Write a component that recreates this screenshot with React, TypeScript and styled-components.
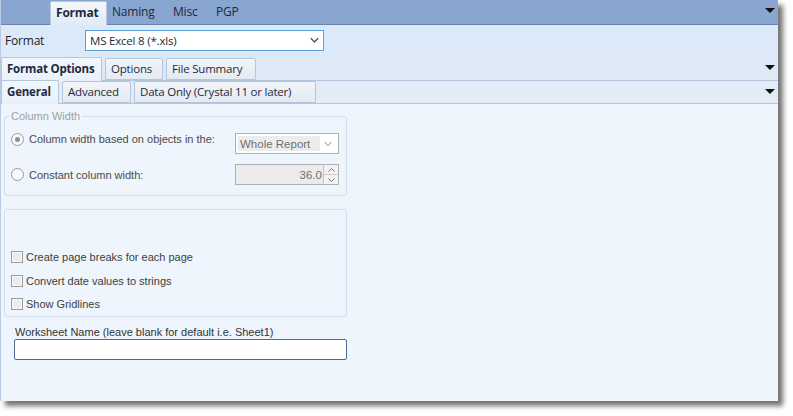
import React from "react";
import styled, {createGlobalStyle} from "styled-components";

const GlobalStyle = createGlobalStyle`
    html, body {
        margin: 0;
        padding: 0;
        background: #ffffff;
    }
    body {
        font-family: "Liberation Sans", Arial, sans-serif;
        font-size: 12px;
        color: #333;
    }
`;

const Page = styled.div`
    width: 793px;
    height: 416px;
`;

const Panel = styled.div`
    width: 778px;
    height: 401px;
    background: #eef5fd;
    border-left: 1px solid #b9cbe2;
    box-sizing: border-box;
    box-shadow: 5px 5px 5px rgba(0, 0, 0, 0.55);
    display: flex;
    flex-direction: column;
`;

const Strip = styled.div<{ $bg: string; $h: number; $pad: number; $line: string }>`
    height: ${(p) => p.$h}px;
    background: ${(p) => p.$bg};
    border-bottom: 1px solid ${(p) => p.$line};
    box-sizing: border-box;
    display: flex;
    align-items: flex-end;
    padding-left: ${(p) => p.$pad}px;
    padding-right: 3px;
    flex-shrink: 0;
`;

const Tab = styled.div<{ $active?: boolean; $w: number }>`
    width: ${(p) => p.$w}px;
    height: ${(p) => (p.$active ? 24 : 22)}px;
    margin-right: 3px;
    margin-bottom: ${(p) => (p.$active ? -1 : 0)}px;
    box-sizing: border-box;
    display: flex;
    align-items: center;
    padding: 0 0 2px 5px;
    font-family: "Open Sans", "Noto Sans", sans-serif;
    font-size: 11.5px;
    letter-spacing: -0.2px;
    font-weight: ${(p) => (p.$active ? 700 : 400)};
    color: #1e2a3c;
    border: 1px solid #b4c6dc;
    border-bottom: ${(p) => (p.$active ? "none" : undefined)};
    border-radius: 2px 2px 0 0;
    background: ${(p) =>
        p.$active
            ? "linear-gradient(#f2f7fd, #e8f1fb)"
            : "linear-gradient(#f2f5f9, #e3eaf3)"};
`;

const TopTab = styled(Tab)`
    font-size: 12px;
    margin-right: 0;
    padding: 0 0 3px ${(p) => (p.$active ? 5 : 4)}px;
    border-color: ${(p) => (p.$active ? "#b7c8de" : "transparent")};
    background: ${(p) => (p.$active ? "linear-gradient(#f4f8fd, #e0ebf8)" : "transparent")};
`;

const Spacer = styled.div`
    flex: 1;
`;

const Arrow = styled.div<{ $lift: number }>`
    width: 0;
    height: 0;
    border-left: 5px solid transparent;
    border-right: 5px solid transparent;
    border-top: 5px solid #111;
    align-self: center;
    margin: 0 0 ${(p) => p.$lift}px 0;
`;

const FormatRow = styled.div`
    height: 31px;
    background: #dce9f9;
    display: flex;
    align-items: center;
    padding-left: 4px;
    flex-shrink: 0;
`;

const RowLabel = styled.div`
    width: 80px;
    font-size: 12px;
    color: #222;
    font-family: "Open Sans", "Noto Sans", sans-serif;
    letter-spacing: -0.2px;
`;

const FormatSelect = styled.div`
    width: 239px;
    height: 21px;
    box-sizing: border-box;
    background: #fff;
    border: 1px solid #5aa0dc;
    display: flex;
    align-items: center;
    padding: 0 4px;
    font-family: "Open Sans", "Noto Sans", sans-serif;
    font-size: 11.5px;
    letter-spacing: -0.2px;
    color: #1b2a40;
    justify-content: space-between;
`;

const Content = styled.div`
    flex: 1;
    padding: 6px 0 0 3px;
    display: flex;
    flex-direction: column;
    font-family: "Liberation Sans", Arial, sans-serif;
    font-size: 11px;
`;

const Group = styled.fieldset<{ $h: number; $top: number }>`
    width: 343px;
    height: ${(p) => p.$h}px;
    box-sizing: border-box;
    margin: ${(p) => p.$top}px 0 0 0;
    padding: 0 6px;
    border: 1px solid #d2dcea;
    border-radius: 3px;
    display: flex;
    flex-direction: column;
`;

const Legend = styled.legend`
    color: #a0a0a0;
    padding: 0 2px;
    margin-left: -2px;
    font-size: 11px;
`;

const Options = styled.div`
    padding-top: 6px;
    display: flex;
    flex-direction: column;
`;

const OptionRow = styled.div<{ $h: number }>`
    height: ${(p) => p.$h}px;
    display: flex;
    align-items: center;
    color: #4a4a4a;
    gap: 5px;
`;

const OptionLead = styled.div<{ $lift: number }>`
    flex: 1;
    display: flex;
    align-items: center;
    gap: 5px;
    margin-bottom: ${(p) => p.$lift}px;
`;

const Radio = styled.span<{ $on?: boolean }>`
    width: 11px;
    height: 11px;
    border-radius: 50%;
    border: 1px solid #9a9a9a;
    background: #fafafa;
    display: inline-flex;
    align-items: center;
    justify-content: center;
    flex-shrink: 0;

    &::after {
        content: "";
        width: 5px;
        height: 5px;
        border-radius: 50%;
        background: ${(p) => (p.$on ? "#8e8e8e" : "transparent")};
    }
`;

const Combo = styled.div`
    width: 104px;
    height: 21px;
    box-sizing: border-box;
    border: 1px solid #b0b0b0;
    background: #fff;
    display: flex;
    align-items: center;
    padding: 2px;
    margin-right: 1px;
    color: #707070;
    font-size: 11.5px;
`;

const ComboText = styled.div`
    width: 80px;
    height: 15px;
    background: #ececec;
    display: flex;
    align-items: center;
    padding-left: 2px;
`;

const ComboChevron = styled.div`
    flex: 1;
    display: flex;
    justify-content: center;
`;

const Spin = styled.div`
    width: 104px;
    height: 21px;
    box-sizing: border-box;
    border: 1px solid #b0b0b0;
    background: #ebebeb;
    display: flex;
    align-items: center;
    margin-right: 1px;
    color: #707070;
    font-size: 11.5px;
`;

const SpinValue = styled.div`
    flex: 1;
    text-align: right;
    padding-right: 1px;
`;

const SpinButtons = styled.div`
    width: 14px;
    height: 19px;
    display: flex;
    flex-direction: column;
    border-left: 1px solid #c4c4c4;
`;

const SpinButton = styled.div`
    flex: 1;
    display: flex;
    align-items: center;
    justify-content: center;
    background: #f2f2f2;
    border-bottom: 1px solid #cfcfcf;

    &:last-child {
        border-bottom: none;
    }
`;

const CheckList = styled.div`
    display: flex;
    flex-direction: column;
    padding-top: 35px;
`;

const Check = styled.span`
    width: 12px;
    height: 12px;
    box-sizing: border-box;
    border: 1px solid #9c9c9c;
    background: #ececec;
    box-shadow: inset 0 0 0 1px #f8f8f8;
    flex-shrink: 0;
`;

const CheckRow = styled(OptionRow)`
    gap: 3px;
    color: #3e3e3e;
`;

const FieldLabel = styled.div`
    margin: 9px 0 0 11px;
    color: #333;
`;

const TextInput = styled.div`
    width: 333px;
    height: 21px;
    box-sizing: border-box;
    margin: 1px 0 0 10px;
    background: #fff;
    border: 1px solid #4b6a96;
    border-radius: 2px;
`;

const Chevron: React.FC<{ color: string; size?: number }> = ({color, size = 9}) => (
    <svg width={size} height={size * 0.7} viewBox="0 0 10 7">
        <path d="M1 1.5 L5 5.5 L9 1.5" fill="none" stroke={color} strokeWidth="1.6"/>
    </svg>
);

const Caret: React.FC<{ up?: boolean }> = ({up}) => (
    <svg width="7" height="4" viewBox="0 0 7 4">
        <path d={up ? "M0.5 3.5 L3.5 0.5 L6.5 3.5" : "M0.5 0.5 L3.5 3.5 L6.5 0.5"} fill="none"
              stroke="#777" strokeWidth="1"/>
    </svg>
);

export default function App() {
    return (
        <Page>
            <GlobalStyle/>
            <Panel>
                <Strip $bg="#88a6cf" $h={25} $pad={49} $line="#6883ac">
                    <TopTab $active $w={57}>Format</TopTab>
                    <TopTab $w={61}>Naming</TopTab>
                    <TopTab $w={43}>Misc</TopTab>
                    <TopTab $w={44}>PGP</TopTab>
                    <Spacer/>
                    <Arrow $lift={4}/>
                </Strip>
                <FormatRow>
                    <RowLabel>Format</RowLabel>
                    <FormatSelect>
                        <span>MS Excel 8 (*.xls)</span>
                        <Chevron color="#555"/>
                    </FormatSelect>
                </FormatRow>
                <Strip $bg="#dfe9f6" $h={25} $pad={0} $line="#b4c6dc">
                    <Tab $active $w={101}>Format Options</Tab>
                    <Tab $w={58}>Options</Tab>
                    <Tab $w={90}>File Summary</Tab>
                    <Spacer/>
                    <Arrow $lift={2}/>
                </Strip>
                <Strip $bg="#e2ecf7" $h={23} $pad={0} $line="#b4c6dc">
                    <Tab $active $w={58}>General</Tab>
                    <Tab $w={69}>Advanced</Tab>
                    <Tab $w={182}>Data Only (Crystal 11 or later)</Tab>
                    <Spacer/>
                    <Arrow $lift={2}/>
                </Strip>
                <Content>
                    <Group $h={86} $top={0}>
                        <Legend>Column Width</Legend>
                        <Options>
                            <OptionRow $h={31}>
                                <OptionLead $lift={9}>
                                    <Radio $on/>
                                    <span>Column width based on objects in the:</span>
                                </OptionLead>
                                <Combo>
                                    <ComboText>Whole Report</ComboText>
                                    <ComboChevron><Chevron color="#b5b5b5" size={8}/></ComboChevron>
                                </Combo>
                            </OptionRow>
                            <OptionRow $h={31}>
                                <OptionLead $lift={0}>
                                    <Radio/>
                                    <span>Constant column width:</span>
                                </OptionLead>
                                <Spin>
                                    <SpinValue>36.0</SpinValue>
                                    <SpinButtons>
                                        <SpinButton><Caret up/></SpinButton>
                                        <SpinButton><Caret/></SpinButton>
                                    </SpinButtons>
                                </Spin>
                            </OptionRow>
                        </Options>
                    </Group>
                    <Group $h={108} $top={13}>
                        <CheckList>
                            <CheckRow $h={24}><Check/>Create page breaks for each page</CheckRow>
                            <CheckRow $h={23}><Check/>Convert date values to strings</CheckRow>
                            <CheckRow $h={23}><Check/>Show Gridlines</CheckRow>
                        </CheckList>
                    </Group>
                    <FieldLabel>Worksheet Name (leave blank for default i.e. Sheet1)</FieldLabel>
                    <TextInput/>
                </Content>
            </Panel>
        </Page>
    );
}
